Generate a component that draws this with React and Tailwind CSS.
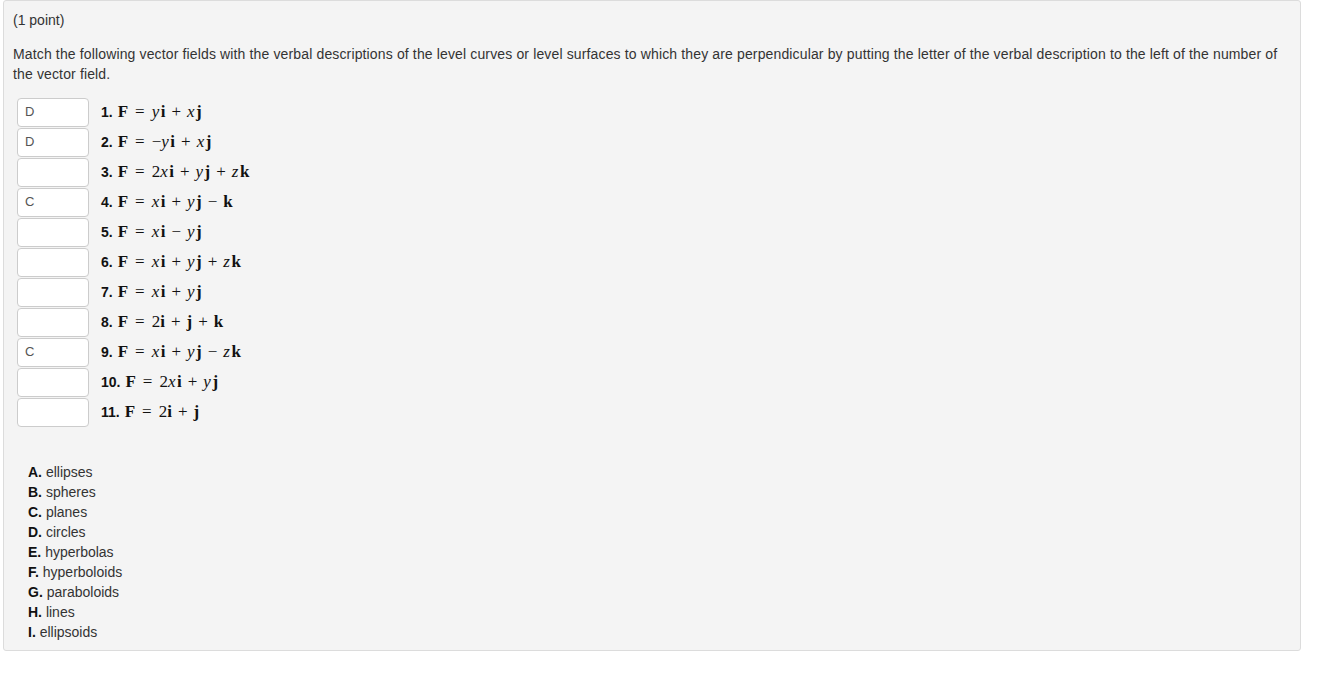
import React from "react";

const M = ({ children }) => (
  <span className="font-['Liberation_Serif',serif] text-[17px]">{children}</span>
);
const V = ({ c }) => <span className="font-bold">{c}</span>;
const I = ({ c }) => <span className="italic mr-[1.5px]">{c}</span>;
const Eq = () => <span className="mx-[7px]">=</span>;
const Op = ({ c }) => <span className="mx-[6px]">{c}</span>;

const rows = [
  ["D", <><V c="F" /><Eq /><I c="y" /><V c="i" /><Op c="+" /><I c="x" /><V c="j" /></>],
  ["D", <><V c="F" /><Eq />−<I c="y" /><V c="i" /><Op c="+" /><I c="x" /><V c="j" /></>],
  ["", <><V c="F" /><Eq />2<I c="x" /><V c="i" /><Op c="+" /><I c="y" /><V c="j" /><Op c="+" /><I c="z" /><V c="k" /></>],
  ["C", <><V c="F" /><Eq /><I c="x" /><V c="i" /><Op c="+" /><I c="y" /><V c="j" /><Op c="−" /><V c="k" /></>],
  ["", <><V c="F" /><Eq /><I c="x" /><V c="i" /><Op c="−" /><I c="y" /><V c="j" /></>],
  ["", <><V c="F" /><Eq /><I c="x" /><V c="i" /><Op c="+" /><I c="y" /><V c="j" /><Op c="+" /><I c="z" /><V c="k" /></>],
  ["", <><V c="F" /><Eq /><I c="x" /><V c="i" /><Op c="+" /><I c="y" /><V c="j" /></>],
  ["", <><V c="F" /><Eq />2<V c="i" /><Op c="+" /><V c="j" /><Op c="+" /><V c="k" /></>],
  ["C", <><V c="F" /><Eq /><I c="x" /><V c="i" /><Op c="+" /><I c="y" /><V c="j" /><Op c="−" /><I c="z" /><V c="k" /></>],
  ["", <><V c="F" /><Eq />2<I c="x" /><V c="i" /><Op c="+" /><I c="y" /><V c="j" /></>],
  ["", <><V c="F" /><Eq />2<V c="i" /><Op c="+" /><V c="j" /></>],
];

const opts = [
  ["A.", "ellipses"],
  ["B.", "spheres"],
  ["C.", "planes"],
  ["D.", "circles"],
  ["E.", "hyperbolas"],
  ["F.", "hyperboloids"],
  ["G.", "paraboloids"],
  ["H.", "lines"],
  ["I.", "ellipsoids"],
];

export default function App() {
  return (
    <div className="w-[1325px] h-[673px] bg-white font-['Liberation_Sans',Arial,sans-serif] text-[14px] leading-[20px] text-[#333]">
      <div className="ml-[3px] w-[1298px] bg-[#f4f4f4] border border-[#dcdcdc] rounded-[3px] pl-[9px] pr-[10px] pt-[9px] pb-[8px]">
        <p>(1 point)</p>
        <p className="mt-[14px] tracking-[0.14px]">
          Match the following vector fields with the verbal descriptions of the level curves or level surfaces to which they are perpendicular by putting the letter of the verbal description to the left of the number of the vector field.
        </p>
        <div className="mt-[13px] ml-[4px] flex flex-col">
          {rows.map(([v, m], i) => (
            <div key={i} className="flex items-center h-[30px]">
              <div className="w-[72px] h-[29px] bg-white border border-[#ccc] rounded-[4px] pl-[7px] flex items-center text-[13px] text-[#555]">
                {v}
              </div>
              <div className="ml-[12px] flex items-center text-[#111]">
                <span className="font-bold mr-[5px]">{i + 1}.</span>
                <M>{m}</M>
              </div>
            </div>
          ))}
        </div>
        <div className="mt-[35px] ml-[15px] flex flex-col">
          {opts.map(([l, t]) => (
            <div key={l} className="h-[20px]">
              <span className="font-bold text-[#111]">{l}</span> {t}
            </div>
          ))}
        </div>
      </div>
    </div>
  );
}
